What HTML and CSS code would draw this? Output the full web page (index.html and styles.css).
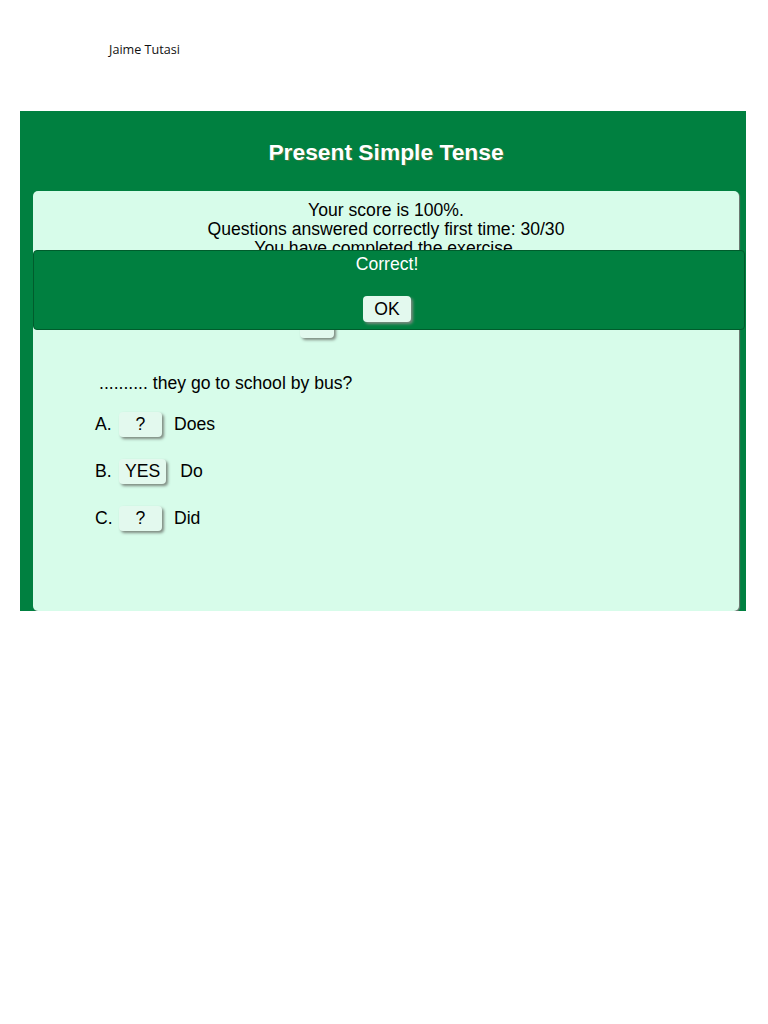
FILE: index.html
```html
<!DOCTYPE html>
<html>
<head>
<meta charset="utf-8">
<link rel="stylesheet" href="styles.css">
</head>
<body>
<div class="author">Jaime Tutasi</div>
<div class="panel">
  <h1 class="title">Present Simple Tense</h1>
  <div class="card">
    <div class="score">
      <div>Your score is 100%.</div>
      <div>Questions answered correctly first time: 30/30</div>
      <div>You have completed the exercise.</div>
    </div>
    <div class="nav">
      <button class="btn nav-btn">&nbsp;</button>
    </div>
    <div class="question">.......... they go to school by bus?</div>
    <div class="options">
      <div class="opt"><span class="letter">A.</span><button class="btn ans">?</button><span class="txt">Does</span></div>
      <div class="opt"><span class="letter">B.</span><button class="btn ans">YES</button><span class="txt">Do</span></div>
      <div class="opt"><span class="letter">C.</span><button class="btn ans">?</button><span class="txt">Did</span></div>
    </div>
  </div>
  <div class="dialog">
    <div class="dlg-text">Correct!</div>
    <button class="btn ok">OK</button>
  </div>
</div>
</body>
</html>
```

FILE: styles.css
```css
html, body {
  margin: 0;
  padding: 0;
  background: #ffffff;
}
body {
  font-family: "Liberation Sans", Arial, sans-serif;
  color: #000;
}
.author {
  font-family: "Open Sans", "Noto Sans", sans-serif;
  font-size: 12.6px;
  line-height: 16px;
  padding: 42px 0 0 109px;
  height: 111px;
  box-sizing: border-box;
  color: #111;
}
.panel {
  position: relative;
  margin-left: 20px;
  width: 726px;
  height: 500px;
  background: #008040;
  overflow: hidden;
  padding-top: 1px;
  box-sizing: border-box;
}
.title {
  margin: 0;
  padding-top: 28px;
  height: 79px;
  box-sizing: border-box;
  text-align: center;
  color: #fff;
  font-size: 22.8px;
  font-weight: bold;
  line-height: 24px;
  padding-left: 6px;
  text-shadow: 1px 1px 0 rgba(120, 120, 60, 0.6);
}
.card {
  margin: 0 7px 0 13px;
  height: 420px;
  background: #d7fcea;
  border-radius: 5px;
  box-shadow: 1px 1px 1px #777;
  padding-top: 10px;
  box-sizing: border-box;
}
.score {
  text-align: center;
  font-size: 17.6px;
  line-height: 19px;
  height: 57px;
  overflow: hidden;
}
.btn {
  font-family: "Liberation Sans", Arial, sans-serif;
  background: #e3f9ee;
  border: none;
  border-radius: 4px;
  box-shadow: 2px 2px 3px #7d8a80;
  color: #000;
  padding: 0;
}
.nav {
  margin-top: 54px;
  padding-left: 267px;
  height: 26px;
}
.nav-btn {
  width: 34px;
  height: 26px;
  display: block;
}
.question {
  margin-top: 36px;
  padding-left: 66px;
  font-size: 17.6px;
  line-height: 19px;
}
.options {
  margin-top: 18px;
  padding-left: 62px;
  display: flex;
  flex-direction: column;
  gap: 21px;
}
.opt {
  display: flex;
  align-items: center;
  height: 26px;
  font-size: 17.6px;
}
.letter {
  width: 24px;
}
.ans {
  font-size: 17.6px;
  height: 25px;
  min-width: 43px;
  padding: 0 6px;
  margin-right: 12px;
}
.opt:nth-child(2) .txt {
  margin-left: 2px;
}
.dialog {
  position: absolute;
  left: 13px;
  top: 139px;
  width: 712px;
  height: 80px;
  background: #008040;
  border: 1px solid #005c2c;
  border-radius: 4px;
  box-sizing: border-box;
  display: flex;
  flex-direction: column;
  align-items: center;
  padding-right: 4px;
}
.dlg-text {
  color: #fff;
  font-size: 17.6px;
  line-height: 19px;
  margin-top: 4px;
}
.ok {
  margin-top: 22px;
  width: 48px;
  height: 26px;
  font-size: 17.6px;
}
```
